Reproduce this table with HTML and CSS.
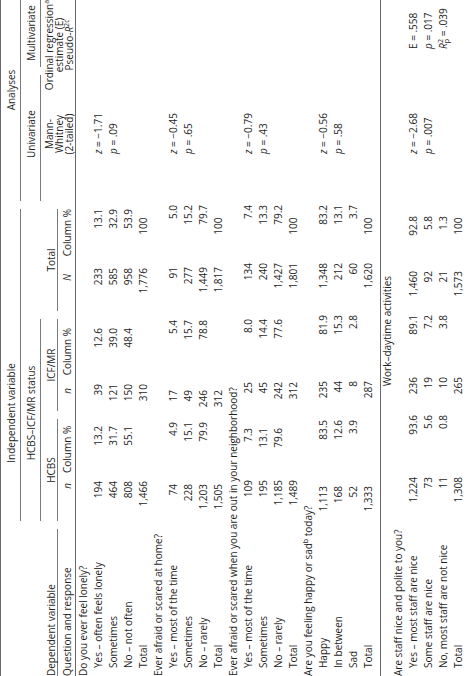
FILE: index.html
```html
<!DOCTYPE html>
<html lang="en">
<head>
<meta charset="utf-8">
<title>Table</title>
<link rel="stylesheet" href="styles.css">
</head>
<body>
<div class="page">
  <div class="sheet">
    <div class="grid head">
      <div class="h a1 rule span-iv">Independent variable</div>
      <div class="h a1 rule span-an">Analyses</div>

      <div class="h b1 rule span-st">HCBS–ICF/MR status</div>
      <div class="h b1 rule c8">Univariate</div>
      <div class="h b1 rule c9">Multivariate</div>

      <div class="h c1 rule c1col left">Dependent variable</div>
      <div class="h c1 rule span-hc">HCBS</div>
      <div class="h c1 rule span-ic">ICF/MR</div>
      <div class="h c1 rule span-tt">Total</div>
      <div class="h multi c8"><span>Mann-</span><span>Whitney</span><span>(2-tailed)</span></div>
      <div class="h multi mv-h c9"><span>Ordinal regression<sup>a</sup></span><span>estimate (E)</span><span>Pseudo-<i>R</i><sup>2c</sup></span></div>

      <div class="h d1 c1col left">Question and response</div>
      <div class="h d1 c2 nh"><i>n</i></div>
      <div class="h d1 c3 num">Column %</div>
      <div class="h d1 c4 nh"><i>n</i></div>
      <div class="h d1 c5 num">Column %</div>
      <div class="h d1 c6 nh"><i>N</i></div>
      <div class="h d1 c7 num">Column %</div>
    </div>

    <div class="grid body">
      <div class="q">Do you ever feel lonely?</div>
      <div class="lab">Yes – often feels lonely</div><div class="num">194</div><div class="num">13.2</div><div class="num">39</div><div class="num">12.6</div><div class="num">233</div><div class="num">13.1</div><div class="st"><i>z</i> = −1.71</div><div></div>
      <div class="lab">Sometimes</div><div class="num">464</div><div class="num">31.7</div><div class="num">121</div><div class="num">39.0</div><div class="num">585</div><div class="num">32.9</div><div class="st"><i>p</i> = .09</div><div></div>
      <div class="lab">No – not often</div><div class="num">808</div><div class="num">55.1</div><div class="num">150</div><div class="num">48.4</div><div class="num">958</div><div class="num">53.9</div><div></div><div></div>
      <div class="lab">Total</div><div class="num">1,466</div><div></div><div class="num">310</div><div></div><div class="num">1,776</div><div class="num int">100</div><div></div><div></div>

      <div class="q">Ever afraid or scared at home?</div>
      <div class="lab">Yes – most of the time</div><div class="num">74</div><div class="num">4.9</div><div class="num">17</div><div class="num">5.4</div><div class="num">91</div><div class="num">5.0</div><div class="st"><i>z</i> = −0.45</div><div></div>
      <div class="lab">Sometimes</div><div class="num">228</div><div class="num">15.1</div><div class="num">49</div><div class="num">15.7</div><div class="num">277</div><div class="num">15.2</div><div class="st"><i>p</i> = .65</div><div></div>
      <div class="lab">No – rarely</div><div class="num">1,203</div><div class="num">79.9</div><div class="num">246</div><div class="num">78.8</div><div class="num">1,449</div><div class="num">79.7</div><div></div><div></div>
      <div class="lab">Total</div><div class="num">1,505</div><div></div><div class="num">312</div><div></div><div class="num">1,817</div><div class="num int">100</div><div></div><div></div>

      <div class="q">Ever afraid or scared when you are out in your neighborhood?</div>
      <div class="lab">Yes – most of the time</div><div class="num">109</div><div class="num">7.3</div><div class="num">25</div><div class="num">8.0</div><div class="num">134</div><div class="num">7.4</div><div class="st"><i>z</i> = −0.79</div><div></div>
      <div class="lab">Sometimes</div><div class="num">195</div><div class="num">13.1</div><div class="num">45</div><div class="num">14.4</div><div class="num">240</div><div class="num">13.3</div><div class="st"><i>p</i> = .43</div><div></div>
      <div class="lab">No – rarely</div><div class="num">1,185</div><div class="num">79.6</div><div class="num">242</div><div class="num">77.6</div><div class="num">1,427</div><div class="num">79.2</div><div></div><div></div>
      <div class="lab">Total</div><div class="num">1,489</div><div></div><div class="num">312</div><div></div><div class="num">1,801</div><div class="num int">100</div><div></div><div></div>

      <div class="q">Are you feeling happy or sad<sup>b</sup> today?</div>
      <div class="lab">Happy</div><div class="num">1,113</div><div class="num">83.5</div><div class="num">235</div><div class="num">81.9</div><div class="num">1,348</div><div class="num">83.2</div><div class="st"><i>z</i> = −0.56</div><div></div>
      <div class="lab">In between</div><div class="num">168</div><div class="num">12.6</div><div class="num">44</div><div class="num">15.3</div><div class="num">212</div><div class="num">13.1</div><div class="st"><i>p</i> = .58</div><div></div>
      <div class="lab">Sad</div><div class="num">52</div><div class="num">3.9</div><div class="num">8</div><div class="num">2.8</div><div class="num">60</div><div class="num">3.7</div><div></div><div></div>
      <div class="lab">Total</div><div class="num">1,333</div><div></div><div class="num">287</div><div></div><div class="num">1,620</div><div class="num int">100</div><div></div><div></div>

      <div class="sect">Work–daytime activities</div>

      <div class="q">Are staff nice and polite to you?</div>
      <div class="lab">Yes – most staff are nice</div><div class="num">1,224</div><div class="num">93.6</div><div class="num">236</div><div class="num">89.1</div><div class="num">1,460</div><div class="num">92.8</div><div class="st"><i>z</i> = −2.68</div><div class="mv">E = .558</div>
      <div class="lab">Some staff are nice</div><div class="num">73</div><div class="num">5.6</div><div class="num">19</div><div class="num">7.2</div><div class="num">92</div><div class="num">5.8</div><div class="st"><i>p</i> = .007</div><div class="mv"><i>p</i> = .017</div>
      <div class="lab">No, most staff are not nice</div><div class="num">11</div><div class="num">0.8</div><div class="num">10</div><div class="num">3.8</div><div class="num">21</div><div class="num">1.3</div><div></div><div class="mv"><i>R</i><sub class="rp">p</sub><sup class="rs">2</sup> = .039</div>
      <div class="lab">Total</div><div class="num">1,308</div><div></div><div class="num">265</div><div></div><div class="num">1,573</div><div class="num int">100</div><div></div><div></div>
    </div>
  </div>
</div>
</body>
</html>
```

FILE: styles.css
```css
html, body {
  margin: 0;
  padding: 0;
  background: #ffffff;
}

.page {
  width: 474px;
  height: 676px;
  overflow: hidden;
  background: #ffffff;
}

.sheet {
  width: 682px;
  height: 474px;
  transform-origin: 0 0;
  transform: translateY(676px) rotate(-90deg);
  font-family: "Open Sans", "Noto Sans", sans-serif;
  font-size: 10px;
  color: #1e1e1e;
}

/* columns: label | HCBS n | HCBS % | ICF n | ICF % | Total N | Total % | Mann-Whitney | Ordinal */
.grid {
  display: grid;
  grid-template-columns: 152px 52px 58px 38px 62px 52px 58px 134px 76px;
}

.head {
  margin-top: 1px;
  border-top: 1px solid #6a6a6a;
  border-bottom: 1px solid #6a6a6a;
  grid-template-rows: 20px 20px 17px 17px;
}

.h {
  white-space: nowrap;
  text-align: center;
  line-height: 12px;
  box-sizing: border-box;
}

.rule {
  border-bottom: 1px solid #7a7a7a;
  margin: 0 4px;
}

.a1 { grid-row: 1; padding-top: 4px; }
.b1 { grid-row: 2; padding-top: 4px; }
.c1 { grid-row: 3; padding-top: 4px; }
.d1 { grid-row: 4; padding-top: 3px; }

.span-iv { grid-column: 2 / 8; padding-right: 96px; }
.span-an { grid-column: 8 / 10; padding-left: 20px; }
.span-st { grid-column: 2 / 6; padding-left: 14px; }
.span-hc { grid-column: 2 / 4; }
.span-ic { grid-column: 4 / 6; }
.span-tt { grid-column: 6 / 8; }

.c1col { grid-column: 1; }
.c2 { grid-column: 2; }
.c3 { grid-column: 3; }
.c4 { grid-column: 4; }
.c5 { grid-column: 5; }
.c6 { grid-column: 6; }
.c7 { grid-column: 7; }
.c8 { grid-column: 8; padding-left: 8px; }
.c9 { grid-column: 9; }

.h.left {
  text-align: left;
  padding-left: 1px;
}

.c1col.rule {
  margin: 0 4px 0 0;
}

.multi {
  grid-row: 3 / 5;
  line-height: 10px;
  padding-top: 3px;
  display: flex;
  flex-direction: column;
  align-items: center;
}

.multi span {
  display: block;
  white-space: nowrap;
}

.mv-h {
  padding-right: 26px;
  padding-left: 2px;
}

.nh {
  text-align: right;
}

.h.c2.nh { padding-right: 10px; }
.h.c4.nh { padding-right: 11px; }
.h.c6.nh { padding-right: 11px; }

.h.num { text-align: right; }
.h.c3.num { padding-right: 11px; }
.h.c5.num { padding-right: 13px; }
.h.c7.num { padding-right: 4px; }

.body {
  grid-auto-rows: 15px;
  line-height: 15px;
}

.body > div {
  white-space: nowrap;
}

.q {
  grid-column: 1 / -1;
  padding-left: 1px;
}

.lab {
  padding-left: 9px;
}

.body .num {
  text-align: right;
}

/* per-column right padding so digits end where the reference's do */
.body .num:nth-child(9n+3) { padding-right: 8px; }
.body .num:nth-child(9n+4) { padding-right: 11px; }
.body .num:nth-child(9n+5) { padding-right: 7px; }
.body .num:nth-child(9n+6) { padding-right: 13px; }
.body .num:nth-child(9n+7) { padding-right: 5px; }
.body .num:nth-child(9n+8) { padding-right: 4px; }

.body .num.int {
  padding-right: 12.5px;
}

.st {
  padding-left: 51px;
}

.mv {
  padding-left: 22px;
}

.sect {
  grid-column: 1 / -1;
  margin-top: 4px;
  border-top: 1px solid #6a6a6a;
  line-height: 12px;
  text-align: center;
  padding-left: 10px;
}

sup, sub {
  font-size: 7px;
  line-height: 0;
}

sup { vertical-align: 4px; }
sub { vertical-align: -2px; }

.rs {
  margin-left: -4px;
}
```
